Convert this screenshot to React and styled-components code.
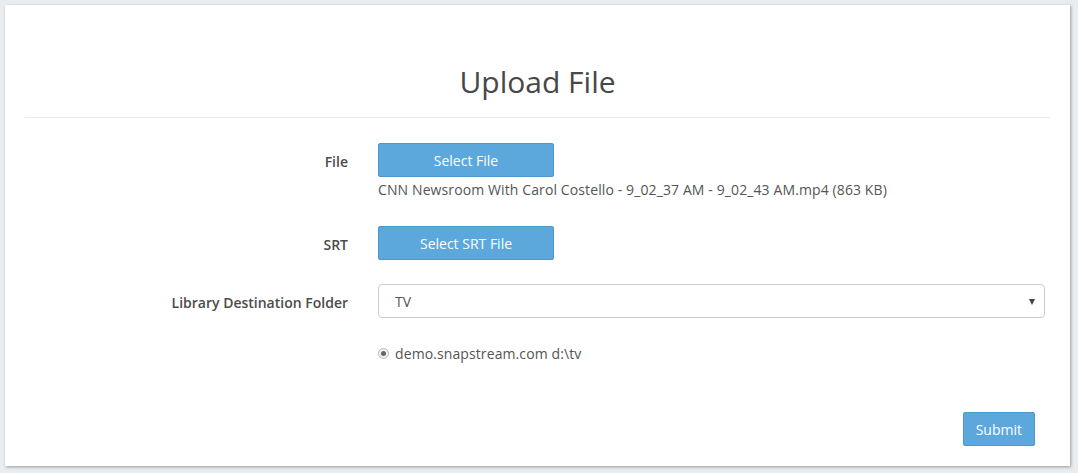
import React from "react";
import styled, { createGlobalStyle } from "styled-components";

const GlobalStyle = createGlobalStyle`
  html, body {
    margin: 0;
    padding: 0;
    background: #e9edf0;
    font-family: "Open Sans", "Liberation Sans", sans-serif;
    color: #555;
  }
`;

const Page = styled.div`
  padding: 5px 8px 7px 5px;
`;

const Card = styled.div`
  background: #fff;
  box-shadow: 1px 1px 3px rgba(0, 0, 0, 0.35);
  padding: 0 20px 20px 20px;
  height: 461px;
  box-sizing: border-box;
`;

const Title = styled.h3`
  margin: 0;
  padding: 58px 0 16px;
  text-align: center;
  font-size: 30px;
  font-weight: 400;
  line-height: 38px;
  color: #484848;
  border-bottom: 1px solid #ebebeb;
`;

const Form = styled.form`
  display: grid;
  grid-template-columns: 323px 667px;
  column-gap: 30px;
  align-items: center;
  padding-top: 25px;
`;

const Label = styled.label`
  justify-self: end;
  font-size: 14px;
  font-weight: 600;
  color: #4b4b4b;
  margin-top: ${(p) => p.$top || 0}px;
  padding-top: 3px;
  align-self: ${(p) => (p.$start ? "start" : "center")};
  line-height: 31px;
`;

const Field = styled.div`
  display: flex;
  flex-direction: column;
  align-items: flex-start;
  margin-top: ${(p) => p.$top || 0}px;
`;

const BlueButton = styled.button`
  background: #5ca8dc;
  border: 1px solid #4c97cb;
  border-radius: 2px;
  color: #fff;
  font-family: inherit;
  font-size: 14px;
  height: 34px;
  width: ${(p) => p.$width || "auto"};
  padding: 0 ${(p) => p.$pad || 14}px;
  cursor: pointer;
`;

const FileName = styled.div`
  font-size: 14px;
  letter-spacing: 0.11px;
  color: #555;
  margin-top: 3px;
  line-height: 20px;
`;

const SelectBox = styled.div`
  position: relative;
  width: 100%;
  height: 34px;
  box-sizing: border-box;
  border: 1px solid #ccc;
  border-radius: 4px;
  display: flex;
  align-items: center;
  padding-left: 16px;
  font-size: 14px;
  color: #555;

  &::after {
    content: "";
    position: absolute;
    right: 9px;
    top: 14px;
    border-left: 3.5px solid transparent;
    border-right: 3.5px solid transparent;
    border-top: 6px solid #444;
  }
`;

const RadioRow = styled.label`
  display: flex;
  align-items: center;
  gap: 6px;
  font-size: 14px;
  letter-spacing: 0.1px;
  color: #555;
`;

const Radio = styled.span`
  width: 11px;
  height: 11px;
  box-sizing: border-box;
  border-radius: 50%;
  border: 1px solid #bbb;
  background: #f1f1f1;
  display: flex;
  align-items: center;
  justify-content: center;

  &::after {
    content: "";
    width: 5px;
    height: 5px;
    border-radius: 50%;
    background: #666;
  }
`;

const Footer = styled.div`
  grid-column: 2;
  display: flex;
  justify-content: flex-end;
  margin-top: ${(p) => p.$top || 0}px;
  padding-right: 10px;
`;

export default function App() {
  return (
    <>
      <GlobalStyle />
      <Page>
        <Card>
          <Title>Upload File</Title>
          <Form onSubmit={(e) => e.preventDefault()}>
            <Label $start>File</Label>
            <Field>
              <BlueButton type="button" $width="176px">
                Select File
              </BlueButton>
              <FileName>
                CNN Newsroom With Carol Costello - 9_02_37 AM - 9_02_43 AM.mp4 (863 KB)
              </FileName>
            </Field>

            <Label $top={26}>SRT</Label>
            <Field $top={26}>
              <BlueButton type="button" $width="176px">
                Select SRT File
              </BlueButton>
            </Field>

            <Label $top={24}>Library Destination Folder</Label>
            <Field $top={24}>
              <SelectBox>TV</SelectBox>
            </Field>

            <div />
            <Field $top={26}>
              <RadioRow>
                <Radio />
                demo.snapstream.com d:\tv
              </RadioRow>
            </Field>

            <Footer $top={49}>
              <BlueButton type="submit" $pad={12}>
                Submit
              </BlueButton>
            </Footer>
          </Form>
        </Card>
      </Page>
    </>
  );
}
